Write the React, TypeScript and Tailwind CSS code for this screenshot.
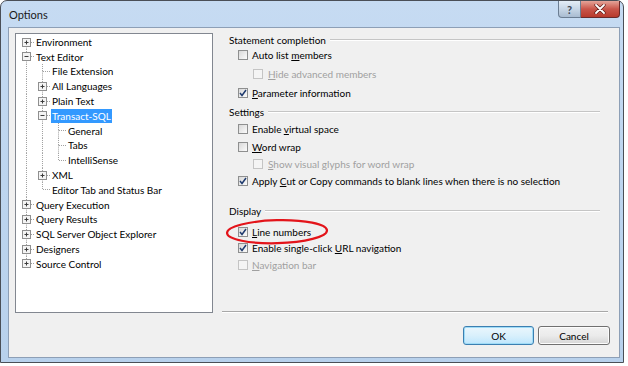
import React from 'react'

type Node = { label: string; children?: Node[]; open?: boolean; selected?: boolean }

const tree: Node[] = [
  { label: 'Environment', children: [] },
  {
    label: 'Text Editor',
    open: true,
    children: [
      { label: 'File Extension' },
      { label: 'All Languages', children: [] },
      { label: 'Plain Text', children: [] },
      {
        label: 'Transact-SQL',
        open: true,
        selected: true,
        children: [{ label: 'General' }, { label: 'Tabs' }, { label: 'IntelliSense' }],
      },
      { label: 'XML', children: [] },
      { label: 'Editor Tab and Status Bar' },
    ],
  },
  { label: 'Query Execution', children: [] },
  { label: 'Query Results', children: [] },
  { label: 'SQL Server Object Explorer', children: [] },
  { label: 'Designers', children: [] },
  { label: 'Source Control', children: [] },
]

type Row = { node: Node; depth: number; more: boolean[]; hasNext: boolean; first: boolean }

function flatten(nodes: Node[], depth: number, more: boolean[], out: Row[]) {
  nodes.forEach((node, i) => {
    const last = i === nodes.length - 1
    out.push({ node, depth, more, hasNext: !last, first: depth === 0 && i === 0 })
    if (node.open && node.children) flatten(node.children, depth + 1, [...more, !last], out)
  })
  return out
}

const rows = flatten(tree, 0, [], [])

const DOT = '#a0a0a0'

function Guide({ line }: { line: boolean }) {
  return (
    <svg width="16" height="14.8" viewBox="0 0 16 14.8" className="shrink-0">
      {line && <line x1="8.5" y1="0" x2="8.5" y2="14.8" stroke={DOT} strokeDasharray="1 1" />}
    </svg>
  )
}

function NodeCell({ row }: { row: Row }) {
  const hasKids = !!row.node.children
  return (
    <svg width="16" height="14.8" viewBox="0 0 16 14.8" className="shrink-0">
      {!row.first && <line x1="8.5" y1="0" x2="8.5" y2="7.4" stroke={DOT} strokeDasharray="1 1" />}
      {row.hasNext && <line x1="8.5" y1="7.4" x2="8.5" y2="14.8" stroke={DOT} strokeDasharray="1 1" />}
      <line x1="9" y1="7.5" x2="16" y2="7.5" stroke={DOT} strokeDasharray="1 1" />
      {hasKids && (
        <g>
          <rect x="4.5" y="3.5" width="8" height="8" fill="#f4f4f4" stroke="#8f8f8f" />
          <line x1="6.5" y1="7.5" x2="10.5" y2="7.5" stroke="#3b3b3b" />
          {!row.node.open && <line x1="8.5" y1="5.5" x2="8.5" y2="9.5" stroke="#3b3b3b" />}
        </g>
      )}
    </svg>
  )
}

function Check({ checked, disabled }: { checked?: boolean; disabled?: boolean }) {
  return (
    <span
      className={`w-[10px] h-[10px] shrink-0 border flex items-center justify-center ${
        disabled
          ? 'border-[#c4c4c4] bg-[#f4f4f4]'
          : 'border-[#8e8f8f] bg-gradient-to-br from-[#d8d8d8] to-[#fbfbfb]'
      }`}
    >
      {checked && (
        <svg width="8" height="8" viewBox="0 0 8 8">
          <path d="M1 4 L3 6.5 L7 1" fill="none" stroke={disabled ? '#a0a0a0' : '#1e3a6e'} strokeWidth="1.5" />
        </svg>
      )}
    </span>
  )
}

function Option({
  children,
  checked,
  disabled,
  sub,
  className = '',
}: {
  children: React.ReactNode
  checked?: boolean
  disabled?: boolean
  sub?: boolean
  className?: string
}) {
  return (
    <div className={`h-[15px] flex items-center gap-[4px] ${sub ? 'pl-[24px]' : 'pl-[9px]'} ${className}`}>
      <Check checked={checked} disabled={disabled} />
      <span className={`whitespace-nowrap ${sub ? 'ml-[1px]' : ''} ${disabled ? 'text-[#a0a0a0]' : 'text-black'}`}>{children}</span>
    </div>
  )
}

function Group({ title, className = '' }: { title: string; className?: string }) {
  return (
    <div className={`h-[15px] flex items-center gap-[4px] ${className}`}>
      <span className="whitespace-nowrap">{title}</span>
      <div className="flex-1 h-[2px] border-t border-[#c5c5c5] border-b border-b-white mt-[1px]" />
    </div>
  )
}

export default function App() {
  return (
    <div className="w-[628px] h-[366px] bg-white relative overflow-hidden text-[10px] leading-none text-black font-['Lato','Noto_Sans',sans-serif]">
      <div className="w-[624px] h-[363px] border border-[#4a4f57] rounded-t-[7px] bg-gradient-to-b from-[#c6dbf2] via-[#bdd5ef] to-[#b8d1ec] flex flex-col">
        {/* title bar */}
        <div className="h-[26px] flex items-start shrink-0">
          <span className="pl-[8px] pt-[8px] text-[11px] text-[#1a1a1a]">Options</span>
          <div className="ml-auto mr-[3px] flex">
            <div className="w-[23px] h-[17px] border border-[#6b7d92] border-t-0 rounded-bl-[4px] bg-gradient-to-b from-[#e4edf6] via-[#c7d6e6] to-[#a9bcd1] flex items-center justify-center text-[11px] font-bold text-[#3c4654]">
              ?
            </div>
            <div className="w-[39px] h-[17px] border border-[#6a2a2a] border-t-0 border-l-0 rounded-br-[4px] bg-gradient-to-b from-[#e4a499] via-[#c9554a] to-[#b83a2c] flex items-center justify-center">
              <svg width="12" height="10" viewBox="0 0 12 10">
                <path d="M2 1 L10 9 M10 1 L2 9" stroke="#5a1a16" strokeWidth="3.2" strokeLinecap="round" />
                <path d="M2 1 L10 9 M10 1 L2 9" stroke="#ffffff" strokeWidth="1.8" strokeLinecap="round" />
              </svg>
            </div>
          </div>
        </div>

        {/* client area */}
        <div className="flex-1 ml-[7px] mr-[3px] mb-[4px] border border-[#8d9fb6] bg-[#f0f0f0] flex flex-col">
          <div className="flex mt-[5px] ml-[6px] h-[280px]">
            {/* tree */}
            <div className="w-[198px] h-full border border-[#828790] bg-white pt-[0.5px] pl-[2px]">
              {rows.map((r, i) => (
                <div key={i} className="h-[14.8px] flex items-center">
                  {r.more.map((m, j) => (
                    <Guide key={j} line={m} />
                  ))}
                  <NodeCell row={r} />
                  <span
                    className={`ml-[1px] px-[1px] h-[14px] flex items-center whitespace-nowrap ${
                      r.node.selected ? 'bg-[#3399ff] text-white' : ''
                    }`}
                  >
                    {r.node.label}
                  </span>
                </div>
              ))}
            </div>

            {/* options */}
            <div className="w-[386px] ml-[9px] h-full flex flex-col pl-[7px] pr-[8px]">
              <Group title="Statement completion" className="-mt-[1px]" />
              <Option>
                Auto list <u>m</u>embers
              </Option>
              <Option sub disabled className="mt-[4px]">
                <u>H</u>ide advanced members
              </Option>
              <Option checked className="mt-[4px]">
                <u>P</u>arameter information
              </Option>
              <Group title="Settings" className="mt-[4px]" />
              <Option className="mt-[2px]">
                Enable <u>v</u>irtual space
              </Option>
              <Option className="mt-[3px]">
                <u>W</u>ord wrap
              </Option>
              <Option sub disabled className="mt-[2px]">
                <u>S</u>how visual glyphs for word wrap
              </Option>
              <Option checked className="mt-[2px]">
                Apply <u>C</u>ut or Copy commands to blank lines when there is no selection
              </Option>
              <Group title="Display" className="mt-[15px]" />
              <Option checked className="mt-[6px]">
                <u>L</u>ine numbers
              </Option>
              <Option checked className="mt-[1px]">
                Enable single-click <u>U</u>RL navigation
              </Option>
              <Option disabled className="mt-[2px]">
                <u>N</u>avigation bar
              </Option>
              <div className="mt-auto -ml-[7px] -mr-[8px] h-[2px] border-t border-[#a8a8a8] border-b border-b-white" />
            </div>
          </div>

          {/* buttons */}
          <div className="flex justify-end gap-[4px] mt-[13px] mr-[9px]">
            <button className="w-[71px] h-[19px] rounded-[3px] border border-[#3c7fb1] shadow-[inset_0_0_0_1px_#9fdcf7] bg-gradient-to-b from-[#eaf6fd] via-[#d9f0fc] to-[#bee6fd] text-[10px] text-black">
              OK
            </button>
            <button className="w-[72px] h-[19px] rounded-[3px] border border-[#707070] shadow-[inset_0_0_0_1px_#fcfcfc] bg-gradient-to-b from-[#f2f2f2] via-[#ebebeb] to-[#d6d6d6] text-[10px] text-black">
              Cancel
            </button>
          </div>
        </div>
      </div>

      {/* red annotation ellipse */}
      <svg className="absolute left-0 top-0 pointer-events-none" width="628" height="366">
        <ellipse cx="277" cy="231.7" rx="50" ry="11.5" fill="none" stroke="#e3141a" strokeWidth="2.2" transform="rotate(-1.5 277 231.7)" />
      </svg>
    </div>
  )
}
